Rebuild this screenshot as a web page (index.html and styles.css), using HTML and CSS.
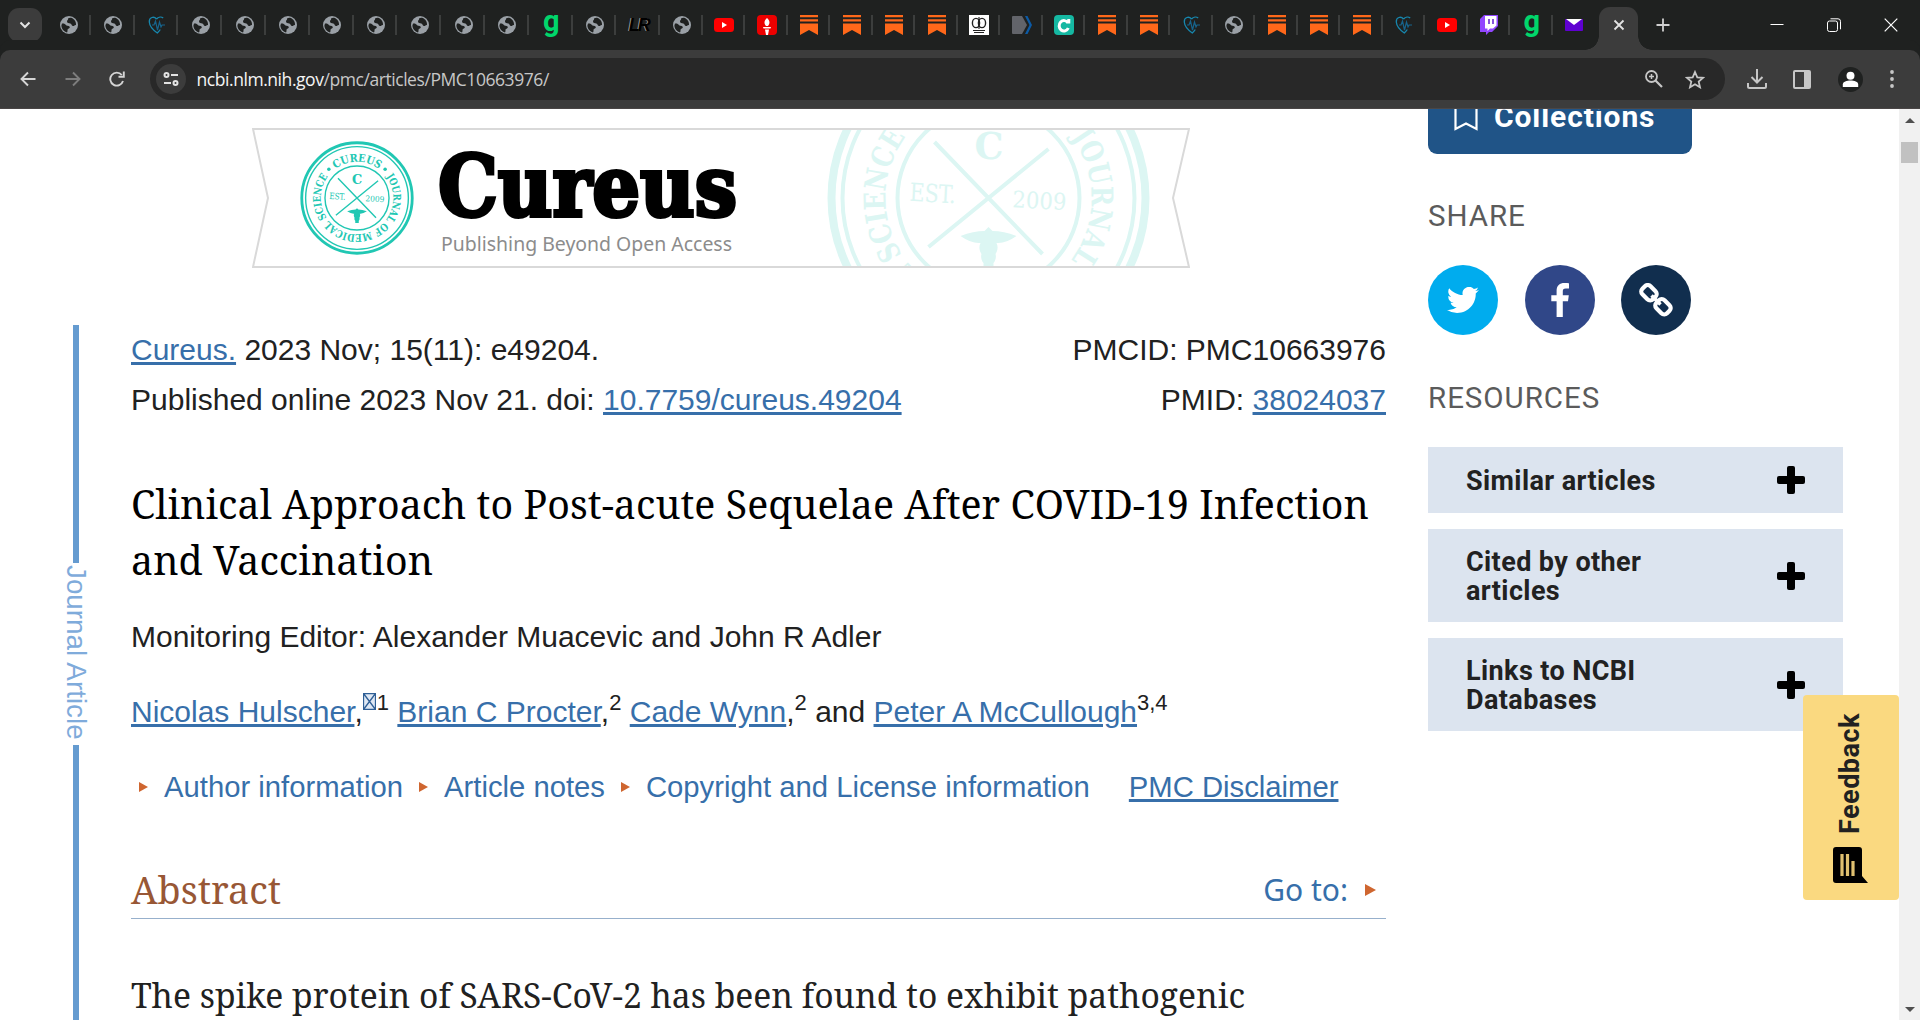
FILE: index.html
```
<!DOCTYPE html>
<html lang="en">
<head>
    <meta charset="UTF-8">
    <meta name="viewport" content="width=device-width, initial-scale=1.0">
    <title>Clinical Approach to Post-acute Sequelae After COVID-19 Infection and Vaccination - PMC</title>
    <link rel="stylesheet" href="styles.css">
</head>
<body>
    <!-- shared icons -->
    <svg width="0" height="0" class="defs">
        <symbol id="globe" viewBox="0 0 20 20">
            <circle cx="10" cy="10" r="9" fill="#9aa0a6"/>
            <path d="M3 8.500c2-.3 3 .2 4 1.500s2.500.5 3.500 1.500-.5 2-1.500 2.500 0 2-1 3.500c-3-.8-5.500-3.500-5.600-7zM9 3.500c1.500-1 4-.8 5 .3 1.800 1 3.300 3.500 3 6.200-1.500-.3-1.800 1.500-3.200 1s-1-2.200-2.500-2.500-3.300-.4-3.300-2 1.500-1.500 1-3z" fill="#1f2120"/>
        </symbol>
        <symbol id="heart" viewBox="0 0 20 20">
            <path d="M9.500 4C7 1 2 2 2.300 7c.3 4 3.700 8 8 11 1-1 2-2 3-3.500M9.500 4c2-2.300 5-2.300 6.700-1" fill="none" stroke="#1787ae" stroke-width="1.300"/>
            <path d="M5 10h2l1.500-4 2 9 2-8 1.500 5 1-2h3" fill="none" stroke="#17648c" stroke-width="1.200"/>
        </symbol>
        <symbol id="substack" viewBox="0 0 20 20">
            <path d="M1 0h18v2.200H1zM1 4.200h18v2.200H1zM1 8.500h18V20l-9-5-9 5z" fill="#ff681a"/>
        </symbol>
        <symbol id="youtube" viewBox="0 0 20 20">
            <rect x="0" y="3" width="20" height="14" rx="3.500" fill="#f00"/>
            <path d="M8 7l5 3-5 3z" fill="#fff"/>
        </symbol>
        <symbol id="seal" viewBox="-162 -162 324 324">
            <g fill="none" stroke="currentColor">
                <circle r="157" stroke-width="8"/>
                <circle r="146" stroke-width="4"/>
                <circle r="91" stroke-width="4"/>
                <path d="M-54-56 54 56M60-49-60 49" stroke-width="4"/>
            </g>
            <path id="ring" d="M0 103A103 103 0 0 1 0-103A103 103 0 0 1 0 103" fill="none"/>
            <path id="ring-low" d="M0-103A103 103 0 0 1 0 103A103 103 0 0 1 0-103" fill="none"/>
            <g fill="currentColor" font-family="'DejaVu Serif Condensed', 'DejaVu Serif', serif">
                <text font-size="31" font-weight="bold"><textPath href="#ring" startOffset="257" textLength="133" lengthAdjust="spacingAndGlyphs">CUREUS</textPath></text>
                <text font-size="30" font-weight="bold"><textPath href="#ring-low" startOffset="96" textLength="455" lengthAdjust="spacingAndGlyphs">JOURNAL OF MEDICAL SCIENCE</textPath></text>
                <circle cx="-80" cy="-82" r="5"/>
                <circle cx="80" cy="-82" r="5"/>
                <text x="-14" y="-39" font-size="38" font-weight="bold" textLength="29" lengthAdjust="spacingAndGlyphs">C</text>
                <text x="-79" y="7" font-size="25" textLength="46" lengthAdjust="spacingAndGlyphs" transform="rotate(3)">EST.</text>
                <text x="24" y="8" font-size="23" textLength="54" lengthAdjust="spacingAndGlyphs" transform="rotate(3)">2009</text>
                <path d="M-28 38q13-5 24-5l4-4 4 4q11 0 24 5-10 7-18 7H8c2 4 1 8-1 11 1 3 0 7-2 9v6h-10v-6c-2-2-3-6-2-9-2-3-3-7-1-11h-2q-8 0-18-7z"/>
            </g>
        </symbol>
    </svg>

    <div class="browser">
        <div class="tab-strip">
            <button class="tab-search"><svg width="12" height="8" viewBox="0 0 12 8"><path d="M1.500 1.500 6 6l4.500-4.500" fill="none" stroke="#e3e3e3" stroke-width="2"/></svg></button>
            <div class="tabs">
                <div class="tab wide"><svg><use href="#globe"/></svg></div>
                <div class="tab wide"><svg><use href="#globe"/></svg></div>
                <div class="tab wide"><svg><use href="#heart"/></svg></div>
                <div class="tab wide"><svg><use href="#globe"/></svg></div>
                <div class="tab wide"><svg><use href="#globe"/></svg></div>
                <div class="tab wide"><svg><use href="#globe"/></svg></div>
                <div class="tab wide"><svg><use href="#globe"/></svg></div>
                <div class="tab wide"><svg><use href="#globe"/></svg></div>
                <div class="tab wide"><svg><use href="#globe"/></svg></div>
                <div class="tab wide"><svg><use href="#globe"/></svg></div>
                <div class="tab wide"><svg><use href="#globe"/></svg></div>
                <div class="tab wide"><span class="gab">g</span></div>
                <div class="tab wide"><svg><use href="#globe"/></svg></div>
                <div class="tab wide"><span class="lr">LR</span></div>
                <div class="tab"><svg><use href="#globe"/></svg></div>
                <div class="tab"><svg><use href="#youtube"/></svg></div>
                <div class="tab"><svg viewBox="0 0 20 20"><rect width="20" height="20" rx="4" fill="#ec0000"/><path d="M10 3c3 3 3.200 5 1 8H9C6.800 8 7 6 10 3zM6 12h8l-.5 1.500h-7zM8 14.500h4L11 20H9z" fill="#fff"/></svg></div>
                <div class="tab"><svg><use href="#substack"/></svg></div>
                <div class="tab"><svg><use href="#substack"/></svg></div>
                <div class="tab"><svg><use href="#substack"/></svg></div>
                <div class="tab"><svg><use href="#substack"/></svg></div>
                <div class="tab"><svg viewBox="0 0 20 20"><rect width="20" height="20" fill="#fff"/><path d="M10 2v12M4 15.500h12M5 17.500h10" stroke="#222" stroke-width="1.100"/><ellipse cx="7" cy="8" rx="3.600" ry="4.600" fill="none" stroke="#222" stroke-width="1.400"/><ellipse cx="13" cy="8" rx="3.600" ry="4.600" fill="none" stroke="#222" stroke-width="1.400"/></svg></div>
                <div class="tab"><svg viewBox="0 0 20 20"><path d="M0 2q0-1 1-1h9l5 9-5 9H1q-1 0-1-1z" fill="#62646a"/><path d="M13 1h2.500l4.500 9-4.500 9H13l4.500-9z" fill="#0b5aa5"/></svg></div>
                <div class="tab"><svg viewBox="0 0 20 20"><rect width="20" height="20" rx="4" fill="#15b8a2"/><path d="M14.800 8.500V4M14 8a4.800 5.200 0 1 0 .3 5" fill="none" stroke="#fff" stroke-width="3"/></svg></div>
                <div class="tab"><svg><use href="#substack"/></svg></div>
                <div class="tab"><svg><use href="#substack"/></svg></div>
                <div class="tab"><svg><use href="#heart"/></svg></div>
                <div class="tab"><svg><use href="#globe"/></svg></div>
                <div class="tab"><svg><use href="#substack"/></svg></div>
                <div class="tab"><svg><use href="#substack"/></svg></div>
                <div class="tab"><svg><use href="#substack"/></svg></div>
                <div class="tab"><svg><use href="#heart"/></svg></div>
                <div class="tab"><svg><use href="#youtube"/></svg></div>
                <div class="tab"><svg viewBox="0 0 20 20"><path d="M5 0h14v11l-6 6h-3l-3 3v-3H1V4z" fill="#9146ff"/><path d="M6 1h11.500v9.500L14 13.500h-3L8.500 16v-2.500H6z" fill="#fff"/><path d="M10 4v5M14 4v5" stroke="#6a2bd0" stroke-width="1.600"/></svg></div>
                <div class="tab"><span class="gab">g</span></div>
                <div class="tab last"><svg viewBox="0 0 20 20"><rect x="1" y="4" width="18" height="12" rx="1" fill="#5f01d1"/><path d="M2 4h16l-8 6z" fill="#fff"/></svg></div>
            </div>
            <div class="tab-active"><svg width="12" height="12" viewBox="0 0 12 12"><path d="M1.500 1.500l9 9m0-9l-9 9" stroke="#e3e3e3" stroke-width="1.800"/></svg></div>
            <button class="new-tab"><svg width="14" height="14" viewBox="0 0 14 14"><path d="M7 .5v13M.5 7h13" stroke="#d0d0d0" stroke-width="1.800"/></svg></button>
            <div class="window-controls">
                <svg width="14" height="14" viewBox="0 0 14 14"><path d="M.5 6.500h13" stroke="#fff"/></svg>
                <svg width="14" height="14" viewBox="0 0 14 14" fill="none" stroke="#fff"><rect x=".5" y="3" width="10" height="10.500" rx="2"/><path d="M3.500.8h7.500q2.500 0 2.500 2.500v8"/></svg>
                <svg width="14" height="14" viewBox="0 0 14 14"><path d="M.7.7l12.600 12.600m0-12.600L.7 13.300" stroke="#fff" stroke-width="1.200"/></svg>
            </div>
        </div>

        <div class="toolbar">
            <svg class="nav-icon" viewBox="0 0 16 16"><path d="M15.500 8H1.500M8 1.500 1.500 8 8 14.500" fill="none" stroke="#d5d5d5" stroke-width="1.900"/></svg>
            <svg class="nav-icon" viewBox="0 0 16 16"><path d="M.5 8h14M8 1.500 14.500 8 8 14.500" fill="none" stroke="#7d7d7d" stroke-width="1.900"/></svg>
            <svg class="nav-icon" viewBox="0 0 16 16"><path d="M14 10a6.500 6.500 0 1 1-1.200-6M14.800.5v5.200H9.500" fill="none" stroke="#d5d5d5" stroke-width="1.900"/></svg>
            <div class="omnibox">
                <span class="site-info"><svg width="16" height="14" viewBox="0 0 16 14" fill="none" stroke="#e3e3e3" stroke-width="2"><circle cx="3.500" cy="3" r="2"/><path d="M8 3h7M1 11h7"/><circle cx="12.500" cy="11" r="2"/></svg></span>
                <span class="url">ncbi.nlm.nih.gov<span>/pmc/articles/PMC10663976/</span></span>
                <svg class="zoom-icon" width="18" height="18" viewBox="0 0 18 18" fill="none" stroke="#c7c7c7"><circle cx="6.500" cy="6.500" r="5.500" stroke-width="1.800"/><path d="M10.500 10.500l6.500 6.500" stroke-width="2.200"/><path d="M6.500 4v5M4 6.500h5" stroke-width="1.500"/></svg>
                <svg width="20" height="19" viewBox="0 0 20 19"><path d="M10 2l2.300 5.300 5.700.5-4.300 3.800 1.300 5.700L10 14.300l-5 3 1.300-5.700L2 7.800l5.700-.5z" fill="none" stroke="#c7c7c7" stroke-width="1.800"/></svg>
            </div>
            <div class="actions">
                <svg width="20" height="20" viewBox="0 0 20 20" fill="none" stroke="#c7c7c7" stroke-width="2"><path d="M10 0v13M4.500 8l5.500 5.500L15.500 8M1 14v3.500Q1 19 2.500 19h15q1.500 0 1.500-1.500V14"/></svg>
                <svg width="18" height="19" viewBox="0 0 18 19"><rect x="1" y="1" width="16" height="17" rx="1" fill="none" stroke="#c7c7c7" stroke-width="2"/><path d="M11 1h6v17h-6z" fill="#c7c7c7"/></svg>
                <svg width="25" height="25" viewBox="0 0 25 25"><circle cx="12.500" cy="12.500" r="12.500" fill="#1f2120"/><circle cx="12.500" cy="8.800" r="4" fill="#fff"/><path d="M4.800 20v-2.500c0-3 4-4 7.700-4s7.700 1 7.700 4V20z" fill="#fff"/></svg>
                <svg width="4" height="18" viewBox="0 0 4 18" fill="#c7c7c7"><circle cx="2" cy="2" r="1.900"/><circle cx="2" cy="9" r="1.900"/><circle cx="2" cy="16" r="1.900"/></svg>
            </div>
        </div>

        <div class="viewport">
            <div class="page">
                <main class="content">
                    <svg class="banner" viewBox="0 0 938 140">
                        <defs><clipPath id="banner-clip"><path d="M1 1h936v138H1z"/></clipPath></defs>
                        <g clip-path="url(#banner-clip)"><use href="#seal" x="574.500" y="-92" width="324" height="324" color="#dcf6f3"/></g>
                        <path d="M1 1h936l-16 69 16 69H1l15-69z" fill="none" stroke="#d9d9d9" stroke-width="2"/>
                        <use href="#seal" x="48" y="13" width="114" height="114" color="#21c7b3"/>
                        <text class="logo-name" x="186" y="88" textLength="299" lengthAdjust="spacingAndGlyphs">Cureus</text>
                        <text class="logo-tagline" x="189" y="123" textLength="291" lengthAdjust="spacingAndGlyphs">Publishing Beyond Open Access</text>
                    </svg>

                    <div class="article">
                        <div class="rail">
                            <div class="rail-line top"></div>
                            <div class="rail-label">Journal Article</div>
                            <div class="rail-line"></div>
                        </div>
                        <div class="article-body">
                            <div class="meta"><span><a href="#">Cureus.</a> 2023 Nov; 15(11): e49204.</span><span>PMCID: PMC10663976</span></div>
                            <div class="meta"><span>Published online 2023 Nov 21. doi: <a href="#">10.7759/cureus.49204</a></span><span>PMID: <a href="#">38024037</a></span></div>
                            <h1>Clinical Approach to Post-acute Sequelae After COVID-19 Infection<br>and Vaccination</h1>
                            <div class="editor">Monitoring Editor: Alexander Muacevic and John R Adler</div>
                            <div class="authors"><a href="#">Nicolas Hulscher</a>,<sup><svg class="mail" viewBox="0 0 13 17"><path d="M.5.5h12v16H.5zM.5.5l12 16m0-16l-12 16" fill="#dfe8f4" stroke="#2f5f96" stroke-width="1.300"/></svg>1</sup> <a href="#">Brian C Procter</a>,<sup>2</sup> <a href="#">Cade Wynn</a>,<sup>2</sup> and <a href="#">Peter A McCullough</a><sup>3,4</sup></div>
                            <div class="info">
                                <span class="toggle">Author information</span>
                                <span class="toggle">Article notes</span>
                                <span class="toggle">Copyright and License information</span>
                                <a href="#">PMC Disclaimer</a>
                            </div>
                            <div class="section-head">
                                <h2>Abstract</h2>
                                <span class="goto">Go to:</span>
                            </div>
                            <p>The spike protein of SARS-CoV-2 has been found to exhibit pathogenic</p>
                        </div>
                    </div>
                </main>

                <aside class="sidebar">
                    <button class="collections"><svg width="24" height="30" viewBox="0 0 24 30"><path d="M1.500 0v28L12 22.500 22.500 28V0" fill="none" stroke="#fff" stroke-width="2.200"/></svg>Collections</button>
                    <h3>SHARE</h3>
                    <div class="share">
                        <a class="twitter" href="#"><svg width="32" height="26" viewBox="0 0 24 19.500"><path d="M23.950 2.300a10 10 0 0 1-2.820.780 4.960 4.960 0 0 0 2.160-2.720c-.95.560-2 .960-3.120 1.180A4.920 4.920 0 0 0 11.780 6C7.690 5.820 4.070 3.840 1.640.880A4.900 4.900 0 0 0 3.160 7.440a4.900 4.900 0 0 1-2.230-.610v.060a4.920 4.920 0 0 0 3.950 4.820 5 5 0 0 1-2.210.090 4.940 4.940 0 0 0 4.600 3.420A9.870 9.870 0 0 1 0 17.250 14 14 0 0 0 7.550 19.460c9.050 0 14-7.500 14-13.980 0-.21 0-.42-.02-.63A9.900 9.900 0 0 0 23.950 2.300z" fill="#fff"/></svg></a>
                        <a class="facebook" href="#"><svg width="18" height="34" viewBox="0 0 18 34"><path d="M18 .2v5.300h-3.200c-2.500 0-3 1.200-3 2.900v3.800h6l-.8 6h-5.200V34H5.600V18.200H.3v-6h5.300V7.700C5.600 2.500 8.800 0 13.400 0c2.200 0 4 .1 4.600.2z" fill="#fff"/></svg></a>
                        <a class="permalink" href="#"><svg width="34" height="34" viewBox="0 0 34 34" fill="none" stroke="#fff" stroke-width="4.200"><rect x="2.500" y="4" width="15" height="11.500" rx="4" transform="rotate(45 10 9.700)"/><rect x="16.500" y="18" width="15" height="11.500" rx="4" transform="rotate(45 24 23.700)"/><path d="M12.500 12.500l9 9" stroke-width="3.600"/></svg></a>
                    </div>
                    <h3 class="resources">RESOURCES</h3>
                    <div class="accordion">
                        <div class="panel"><span>Similar articles</span><i class="plus"></i></div>
                        <div class="panel double"><span>Cited by other<br>articles</span><i class="plus"></i></div>
                        <div class="panel double"><span>Links to NCBI<br>Databases</span><i class="plus"></i></div>
                    </div>
                </aside>
            </div>

            <div class="feedback">
                <span>Feedback</span>
                <svg width="35" height="38" viewBox="0 0 35 38"><path d="M3 1h23q3 0 3 3v26l6 7H3q-3 0-3-3V4q0-3 3-3z" fill="#000"/><path d="M9 8v22M14.500 8v22M20 15v15" stroke="#dfc070" stroke-width="3.200"/></svg>
            </div>

            <div class="scrollbar">
                <span class="arrow up"></span>
                <span class="thumb"></span>
                <span class="arrow down"></span>
            </div>
        </div>
    </div>
</body>
</html>
```
FILE: styles.css
```
:root {
    --chrome-dark: #1f2120;
    --chrome: #3c3c3c;
    --omnibox: #282828;
    --link: #376faa;
    --rail: #659bd0;
    --text: #212121;
}
* {
    box-sizing: border-box;
}
body {
    margin: 0;
    font-family: "Liberation Sans", Arial, sans-serif;
    color: var(--text);
    background-color: #fff;
}
button {
    border: none;
    padding: 0;
    background: none;
}
svg {
    display: block;
    flex: none;
}
.defs {
    display: none;
}
a {
    color: var(--link);
    text-decoration-thickness: 3px;
    text-underline-offset: 2px;
}
.browser {
    display: flex;
    flex-direction: column;
    height: 1020px;
    overflow: hidden;
}

/* tab strip */
.tab-strip {
    display: flex;
    align-items: center;
    height: 50px;
    background-color: var(--chrome-dark);
}
.tab-search {
    display: flex;
    align-items: center;
    justify-content: center;
    width: 34px;
    height: 34px;
    margin: 0 5px 0 8px;
    border-radius: 11px;
    background-color: var(--chrome);
}
.tabs {
    display: flex;
}
.tab {
    display: flex;
    align-items: center;
    justify-content: center;
    width: 42.5px;
    height: 20px;
    padding-left: 3px;
    border-right: 2px solid #3c3e3d;
}
.tab.wide {
    width: 43.8px;
}
.tab.last {
    border-right-color: transparent;
}
.tab svg {
    width: 20px;
    height: 20px;
}
.gab {
    font: bold 29px/20px Roboto, sans-serif;
    color: #00d66b;
    margin-top: -8px;
}
.lr {
    font: italic bold 18px/20px "Liberation Sans", sans-serif;
    letter-spacing: -2px;
    color: #000;
    text-shadow: -1px 0 0 #9a9a9a;
}
.tab-active {
    position: relative;
    display: flex;
    align-items: center;
    justify-content: center;
    width: 39px;
    height: 43px;
    margin: 7px 0 0 4px;
    padding-bottom: 7px;
    border-radius: 11px 11px 0 0;
    background-color: var(--chrome);
}
.tab-active::before,
.tab-active::after {
    content: "";
    position: absolute;
    bottom: 0;
    width: 14px;
    height: 14px;
}
.tab-active::before {
    right: 100%;
    background: radial-gradient(circle at 0 0, transparent 13.5px, var(--chrome) 14px);
}
.tab-active::after {
    left: 100%;
    background: radial-gradient(circle at 100% 0, transparent 13.5px, var(--chrome) 14px);
}
.new-tab {
    margin-left: 18px;
}
.window-controls {
    display: flex;
    gap: 43px;
    margin: 0 22px 0 auto;
}

/* toolbar */
.toolbar {
    display: flex;
    align-items: center;
    height: 59px;
    background-color: var(--chrome);
    border-bottom: 1px solid #4a4646;
    border-radius: 10px 10px 0 0;
    box-shadow: 0 -10px 0 0 var(--chrome-dark);
    padding-left: 20px;
}
.nav-icon {
    width: 16px;
    height: 16px;
    margin-right: 28.5px;
}
.omnibox {
    display: flex;
    align-items: center;
    width: 1575px;
    height: 42px;
    margin-left: -4px;
    padding: 0 20px 0 6px;
    border-radius: 21px;
    background-color: var(--omnibox);
}
.site-info {
    display: flex;
    align-items: center;
    justify-content: center;
    width: 30px;
    height: 30px;
    border-radius: 50%;
    background-color: var(--chrome);
}
.url {
    margin-left: 11px;
    font-family: "Open Sans", sans-serif;
    font-size: 17.5px;
    letter-spacing: -0.44px;
    color: #f5f5f5;
}
.url span {
    color: #c7c7c7;
}
.zoom-icon {
    margin: 0 22px 0 auto;
}
.actions {
    display: flex;
    flex: 1;
    align-items: center;
    justify-content: space-between;
    padding: 0 26px 0 22px;
}

/* page */
.viewport {
    position: relative;
    display: flex;
    flex: 1;
    min-height: 0;
    overflow: hidden;
}
.page {
    display: flex;
    flex: 1;
    gap: 42px;
}
.content {
    display: flex;
    flex-direction: column;
    width: 1386px;
}
.banner {
    width: 938px;
    height: 140px;
    margin: 19px 0 57px 252px;
}
.logo-name {
    font: bold 85px "DejaVu Serif", serif;
    stroke: #000;
    stroke-width: 4px;
}
.logo-tagline {
    font: 20px "Noto Sans", sans-serif;
    fill: #8c8c8c;
}
.article {
    display: flex;
    flex: 1;
}
.rail {
    display: flex;
    flex-direction: column;
    align-items: center;
    width: 24px;
    margin: 0 43px 0 64px;
}
.rail-line {
    flex: 1;
    width: 6px;
    background-color: var(--rail);
}
.rail-line.top {
    flex: none;
    height: 238px;
}
.rail-label {
    height: 182px;
    padding-top: 2px;
    writing-mode: vertical-rl;
    font-size: 27.8px;
    line-height: 24px;
    white-space: nowrap;
    color: #7fabdb;
}
.article-body {
    flex: 1;
    font-size: 30px;
    line-height: 50px;
    white-space: nowrap;
}
.meta {
    display: flex;
    justify-content: space-between;
}
h1, h2, p {
    font-family: "Noto Serif", Cambria, serif;
    font-weight: normal;
}
h1 {
    margin: 51px 0 24px;
    font-size: 39.3px;
    line-height: 56px;
    letter-spacing: 0.06px;
    color: #000;
}
.authors {
    margin-top: 25px;
}
sup {
    font-size: 22px;
    line-height: 0;
    vertical-align: 12px;
}
.mail {
    display: inline-block;
    width: 13px;
    height: 17px;
    margin-right: 1px;
}
.info {
    display: flex;
    margin-top: 25px;
    padding-left: 8px;
    font-size: 29.25px;
    color: var(--link);
}
.toggle {
    display: flex;
    align-items: center;
    margin-right: 16px;
}
.toggle::before,
.goto::after {
    content: "";
    border: solid transparent;
    border-width: 5px 0 5px 9px;
    border-left-color: #cf6630;
}
.toggle::before {
    margin-right: 16px;
}
.info a {
    margin-left: 23px;
}
.section-head {
    display: flex;
    justify-content: space-between;
    margin-top: 50px;
    border-bottom: 1px solid #97b0cc;
}
h2 {
    margin: 0;
    font-size: 37.7px;
    line-height: 56px;
    color: #985735;
}
.goto {
    display: flex;
    align-items: center;
    margin-right: 10px;
    font-family: "Noto Sans", sans-serif;
    color: var(--link);
}
.goto::after {
    margin-left: 17px;
    border-width: 6px 0 6px 11px;
}
p {
    margin: 46px 0 0;
    font-size: 33.65px;
    line-height: 60px;
}

/* sidebar */
.sidebar {
    width: 415px;
    font-family: Roboto, sans-serif;
}
.collections {
    display: flex;
    align-items: center;
    gap: 16px;
    width: 264px;
    height: 76px;
    margin-top: -31px;
    padding-left: 26px;
    border-radius: 9px;
    background-color: #205487;
    font: bold 30px Roboto, sans-serif;
    letter-spacing: 0.9px;
    color: #fff;
}
h3 {
    margin: 42px 0 29px;
    font-size: 29.5px;
    font-weight: normal;
    line-height: 40px;
    letter-spacing: 0.95px;
    color: #5b5b5b;
}
.share {
    display: flex;
    gap: 26.5px;
}
.share a {
    display: flex;
    align-items: center;
    justify-content: center;
    width: 70px;
    height: 70px;
    border-radius: 50%;
}
.twitter {
    background-color: #00acee;
}
.facebook {
    background-color: #304788;
}
.permalink {
    background-color: #112e4e;
}
h3.resources {
    margin: 43px 0 29px;
}
.accordion {
    display: flex;
    flex-direction: column;
    gap: 16px;
}
.panel {
    display: flex;
    align-items: center;
    justify-content: space-between;
    height: 66px;
    padding: 0 38px;
    background-color: #dce4ef;
    font-size: 27px;
    font-weight: bold;
    line-height: 28.5px;
    letter-spacing: 0.4px;
}
.panel span {
    padding-top: 2px;
}
.panel.double {
    height: 93px;
}
.plus {
    display: grid;
    width: 28px;
    height: 28px;
}
.plus::before,
.plus::after {
    content: "";
    grid-area: 1 / 1;
    place-self: center;
    width: 28px;
    height: 8px;
    border-radius: 2px;
    background-color: #000;
}
.plus::after {
    width: 8px;
    height: 28px;
}
.feedback {
    position: absolute;
    right: 21px;
    top: 586px;
    display: flex;
    flex-direction: column;
    align-items: center;
    gap: 12px;
    width: 96px;
    height: 205px;
    padding: 18px 2px 0 0;
    border-radius: 4px;
    background-color: #fad980;
    font: bold 27px/32px Roboto, sans-serif;
    letter-spacing: 0.5px;
}
.feedback span {
    writing-mode: vertical-rl;
    transform: rotate(180deg);
}
.scrollbar {
    display: flex;
    flex-direction: column;
    align-items: center;
    width: 21px;
    background-color: #f1f1f1;
}
.arrow {
    border: solid transparent;
    border-width: 0 5px 5px;
    border-bottom-color: #505050;
}
.arrow.up {
    margin: 9px 0 19px;
}
.arrow.down {
    margin: auto 0 8px;
    transform: rotate(180deg);
}
.thumb {
    width: 17px;
    height: 21px;
    background-color: #c1c1c1;
}
```
